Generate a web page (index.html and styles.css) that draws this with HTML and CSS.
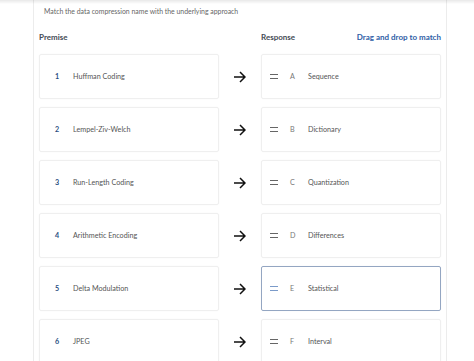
FILE: index.html
```html
<!DOCTYPE html>
<html lang="en">
<head>
    <meta charset="UTF-8">
    <title>Matching question</title>
    <link rel="stylesheet" href="styles.css">
</head>
<body>
    <div class="card">
        <p class="prompt">Match the data compression name with the underlying approach</p>

        <div class="match">
            <div class="head">Premise</div>
            <div></div>
            <div class="head head-right">
                <span>Response</span>
                <span class="hint">Drag and drop to match</span>
            </div>

            <div class="item"><span class="num">1</span>Huffman Coding</div>
            <div class="arrow"><svg width="13" height="12" viewBox="0 0 13 12"><path d="M1 6H12M7 1L12 6L7 11" fill="none" stroke="#111" stroke-width="1.5"/></svg></div>
            <div class="item resp"><span class="grip"></span><span class="letter">A</span>Sequence</div>

            <div class="item"><span class="num">2</span>Lempel-Ziv-Welch</div>
            <div class="arrow"><svg width="13" height="12" viewBox="0 0 13 12"><path d="M1 6H12M7 1L12 6L7 11" fill="none" stroke="#111" stroke-width="1.5"/></svg></div>
            <div class="item resp"><span class="grip"></span><span class="letter">B</span>Dictionary</div>

            <div class="item"><span class="num">3</span>Run-Length Coding</div>
            <div class="arrow"><svg width="13" height="12" viewBox="0 0 13 12"><path d="M1 6H12M7 1L12 6L7 11" fill="none" stroke="#111" stroke-width="1.5"/></svg></div>
            <div class="item resp"><span class="grip"></span><span class="letter">C</span>Quantization</div>

            <div class="item"><span class="num">4</span>Arithmetic Encoding</div>
            <div class="arrow"><svg width="13" height="12" viewBox="0 0 13 12"><path d="M1 6H12M7 1L12 6L7 11" fill="none" stroke="#111" stroke-width="1.5"/></svg></div>
            <div class="item resp"><span class="grip"></span><span class="letter">D</span>Differences</div>

            <div class="item"><span class="num">5</span>Delta Modulation</div>
            <div class="arrow"><svg width="13" height="12" viewBox="0 0 13 12"><path d="M1 6H12M7 1L12 6L7 11" fill="none" stroke="#111" stroke-width="1.5"/></svg></div>
            <div class="item resp active"><span class="grip"></span><span class="letter">E</span>Statistical</div>

            <div class="item"><span class="num">6</span>JPEG</div>
            <div class="arrow"><svg width="13" height="12" viewBox="0 0 13 12"><path d="M1 6H12M7 1L12 6L7 11" fill="none" stroke="#111" stroke-width="1.5"/></svg></div>
            <div class="item resp"><span class="grip"></span><span class="letter">F</span>Interval</div>
        </div>
    </div>
</body>
</html>
```

FILE: styles.css
```css
html, body {
    margin: 0;
    padding: 0;
    background: #fff;
    font-family: Lato, "Noto Sans", sans-serif;
}
body::before {
    content: "";
    position: fixed;
    top: 0;
    left: 0;
    right: 0;
    height: 4px;
    background: linear-gradient(rgba(0, 0, 0, 0.09), rgba(0, 0, 0, 0));
}
.card {
    margin-left: 33px;
    width: 402px;
    min-height: 361px;
    padding: 4px 5px 0 5px;
    border-left: 1px solid #ececec;
    border-right: 1px solid #ececec;
}
.prompt {
    margin: 0 0 0 5px;
    font-size: 6.9px;
    line-height: 14px;
    color: #666;
}
.match {
    display: grid;
    grid-template-columns: 180px 42px 180px;
    row-gap: 8px;
    margin-top: 13px;
}
.head {
    font-size: 8px;
    font-weight: bold;
    color: #444b55;
    line-height: 12px;
    margin-bottom: 3px;
}
.head-right {
    display: flex;
    justify-content: space-between;
}
.hint {
    color: #2f5ea6;
}
.item {
    display: flex;
    align-items: center;
    height: 43px;
    border: 1px solid #efefef;
    border-radius: 2px;
    box-shadow: 0 0 2px rgba(0, 0, 0, 0.03);
    font-size: 7.2px;
    color: #555;
}
.num {
    width: 18px;
    padding-left: 15px;
    font-weight: bold;
    color: #2b4f82;
}
.arrow {
    display: flex;
    align-items: center;
    padding-left: 14px;
}
.grip {
    width: 8px;
    height: 2.5px;
    margin-left: 8px;
    border-top: 1.5px solid #666;
    border-bottom: 1.5px solid #666;
}
.letter {
    width: 18px;
    padding-left: 12px;
    color: #777;
}
.active {
    border-color: #94a6c2;
}
.active .grip {
    border-color: #7b9bc9;
}
```
